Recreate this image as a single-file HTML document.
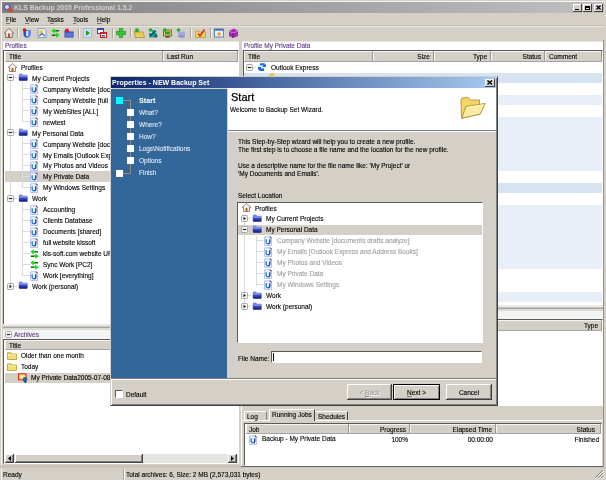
<!DOCTYPE html><html><head><meta charset="utf-8"><style>
html,body{margin:0;padding:0}
body{width:606px;height:480px;overflow:hidden;position:relative;background:#d4d0c8;font-family:'Liberation Sans', sans-serif}
.a{position:absolute}
.t{font-family:'Liberation Sans', sans-serif;font-size:6.5px;line-height:11px;white-space:nowrap;color:#000;-webkit-text-stroke:0.12px currentColor;will-change:transform}
svg{overflow:visible}
u{text-decoration-thickness:0.6px;text-underline-offset:0.8px;text-decoration-color:#777}
</style></head><body>
<div class="a" style="left:0px;top:0px;width:606px;height:480px;background:#d4d0c8"></div>
<div class="a" style="left:1px;top:1px;width:1px;height:479px;background:#f4f4f2"></div>
<div class="a" style="left:1px;top:1px;width:604px;height:1px;background:#f4f4f2"></div>
<div class="a" style="left:2px;top:2px;width:602px;height:11px;background:linear-gradient(to right,#808080,#c0c0c0)"></div>
<svg class="a" style="left:3px;top:3px" width="10" height="10" viewBox="0 0 10 10"><circle cx="4" cy="4" r="3.6" fill="#5d63a8"/><circle cx="4" cy="4" r="2" fill="#d8dcf4"/><path d="M5 6 L8 9 M6.5 5.5 L9.5 8" stroke="#e23a1e" stroke-width="1.4"/></svg>
<div class="a" style="left:14px;top:2px;font:bold 6.9px/11px 'Liberation Sans', sans-serif;color:#d4d0c8;white-space:nowrap;will-change:transform">KLS Backup 2005 Professional 1.5.2</div>
<div class="a" style="left:573px;top:4px;width:9px;height:8px;background:#d4d0c8;box-sizing:border-box;border-right:1px solid #404040;border-bottom:1px solid #404040;box-shadow:inset 1px 1px 0 #fff"></div>
<div class="a" style="left:575px;top:9px;width:4px;height:1px;background:#000"></div>
<div class="a" style="left:583px;top:4px;width:9px;height:8px;background:#d4d0c8;box-sizing:border-box;border-right:1px solid #404040;border-bottom:1px solid #404040;box-shadow:inset 1px 1px 0 #fff"></div>
<div class="a" style="left:585px;top:6px;width:5px;height:4px;border:1px solid #000;border-top-width:2px;box-sizing:border-box"></div>
<div class="a" style="left:594px;top:4px;width:9px;height:8px;background:#d4d0c8;box-sizing:border-box;border-right:1px solid #404040;border-bottom:1px solid #404040;box-shadow:inset 1px 1px 0 #fff"></div>
<svg class="a" style="left:596px;top:5px" width="5" height="5" viewBox="0 0 5 5"><path d="M0.5 0.5 L4.5 4.5 M4.5 0.5 L0.5 4.5" stroke="#000" stroke-width="1.2"/></svg>
<div class="a t" style="left:5.5px;top:14px;"><u>F</u>ile</div>
<div class="a t" style="left:24.5px;top:14px;"><u>V</u>iew</div>
<div class="a t" style="left:47px;top:14px;">T<u>a</u>sks</div>
<div class="a t" style="left:73px;top:14px;"><u>T</u>ools</div>
<div class="a t" style="left:96.5px;top:14px;"><u>H</u>elp</div>
<div class="a" style="left:2px;top:25px;width:602px;height:1px;background:#c0bcb4"></div>
<div class="a" style="left:2px;top:26px;width:602px;height:1px;background:#eceae6"></div>
<div class="a" style="left:17px;top:28px;width:1px;height:10px;background:#a8a49c"></div>
<div class="a" style="left:18px;top:28px;width:1px;height:10px;background:#f4f3f0"></div>
<div class="a" style="left:78px;top:28px;width:1px;height:10px;background:#a8a49c"></div>
<div class="a" style="left:79px;top:28px;width:1px;height:10px;background:#f4f3f0"></div>
<div class="a" style="left:112px;top:28px;width:1px;height:10px;background:#a8a49c"></div>
<div class="a" style="left:113px;top:28px;width:1px;height:10px;background:#f4f3f0"></div>
<div class="a" style="left:130px;top:28px;width:1px;height:10px;background:#a8a49c"></div>
<div class="a" style="left:131px;top:28px;width:1px;height:10px;background:#f4f3f0"></div>
<div class="a" style="left:190px;top:28px;width:1px;height:10px;background:#a8a49c"></div>
<div class="a" style="left:191px;top:28px;width:1px;height:10px;background:#f4f3f0"></div>
<div class="a" style="left:210px;top:28px;width:1px;height:10px;background:#a8a49c"></div>
<div class="a" style="left:211px;top:28px;width:1px;height:10px;background:#f4f3f0"></div>
<!--TOOLBAR-->
<svg class="a" style="left:4px;top:28px" width="10" height="10" viewBox="0 0 10 10"><path d="M5 0.5 L0.3 5 L1.8 5 L1.8 9.5 L8.2 9.5 L8.2 5 L9.7 5 Z" fill="#f2ede4" stroke="#7d736a" stroke-width="1"/><rect x="4" y="5.5" width="2" height="4" fill="#c24e16"/></svg>
<svg class="a" style="left:22px;top:28px" width="10" height="10" viewBox="0 0 10 10"><path d="M1.5 2 L8.5 2 L8.5 6 Q8.5 9 5 9.8 Q1.5 9 1.5 6 Z" fill="#2a50c8"/><path d="M5 2 L8.5 2 L8.5 6 Q8.5 9 5 9.8Z" fill="#5d86e8"/><rect x="4.3" y="3" width="1.6" height="5" fill="#fff"/><circle cx="2.5" cy="2" r="1.8" fill="#e01818"/></svg>
<svg class="a" style="left:37px;top:28px" width="10" height="10" viewBox="0 0 10 10"><path d="M1 0.5 L7 0.5 L9 2.5 L9 9.5 L1 9.5 Z" fill="#e9eef8" stroke="#7a8fb8" stroke-width="0.8"/><circle cx="4" cy="4" r="2" fill="#f0cc30"/><path d="M2 8 L5 5.5 L8 8" stroke="#3a70d0" stroke-width="1.2" fill="none"/></svg>
<svg class="a" style="left:51px;top:28px" width="9" height="10" viewBox="0 0 9 10"><path d="M3.5 2.8 L8 2.8" stroke="#0a5a0a" stroke-width="1.4"/><path d="M0.3 2.8 L3.8 0.2 L3.8 5.4 Z" fill="#10e010"/><path d="M3.5 2.8 L5 2.8" stroke="#10e010" stroke-width="1.4"/><path d="M0.8 7.2 L5.5 7.2" stroke="#0a5a0a" stroke-width="1.4"/><path d="M8.7 7.2 L5.2 4.6 L5.2 9.8 Z" fill="#10e010"/><path d="M4 7.2 L5.5 7.2" stroke="#10e010" stroke-width="1.4"/></svg>
<svg class="a" style="left:64px;top:28px" width="10" height="10" viewBox="0 0 10 10"><path d="M0.5 2.5 L4 2.5 L5 3.5 L9.5 3.5 L9.5 9.5 L0.5 9.5 Z" fill="#2b3fb0"/><rect x="1.2" y="4.5" width="7.6" height="4.3" fill="#5a76da"/><circle cx="3" cy="2.3" r="1.9" fill="#e01818"/></svg>
<svg class="a" style="left:83px;top:28px" width="9" height="10" viewBox="0 0 9 10"><rect x="0.5" y="0.5" width="8" height="9" fill="#cfe0f8" stroke="#9ab4dc" stroke-width="0.8"/><path d="M3 2.2 L7 5 L3 7.8 Z" fill="#12a012"/></svg>
<svg class="a" style="left:97px;top:28px" width="10" height="10" viewBox="0 0 10 10"><rect x="0.5" y="0.5" width="6" height="5" fill="#fff" stroke="#2a4ac0" stroke-width="1"/><rect x="0.5" y="0.5" width="6" height="1.5" fill="#2a4ac0"/><rect x="3.5" y="4.5" width="6" height="5" fill="#fff" stroke="#d02020" stroke-width="1"/><rect x="3.5" y="4.5" width="6" height="1.5" fill="#d02020"/><rect x="5" y="7" width="3" height="1.5" fill="#2a4ac0"/></svg>
<svg class="a" style="left:116px;top:28px" width="10" height="10" viewBox="0 0 10 10"><path d="M3.3 0.5 H6.7 V3.3 H9.5 V6.7 H6.7 V9.5 H3.3 V6.7 H0.5 V3.3 H3.3 Z" fill="#36c236" stroke="#1d8a1d" stroke-width="0.6"/></svg>
<svg class="a" style="left:134px;top:28px" width="11" height="10" viewBox="0 0 11 10"><path d="M0.5 4 L9 4 L10.5 9.5 L1.5 9.5 Z" fill="#e8cf5a" stroke="#a88a20" stroke-width="0.7"/><path d="M0.5 4 L0.5 3 L4 3" stroke="#a88a20" stroke-width="0.7" fill="#e8cf5a"/><circle cx="3" cy="2.3" r="2" fill="#22b022"/></svg>
<svg class="a" style="left:148px;top:28px" width="10" height="10" viewBox="0 0 10 10"><path d="M1 9.5 L1 5 L4 5 L4 2 L7 2 L7 5 L9 5 L9 9.5 Z" fill="#1f9e9e"/><path d="M2 8 L8 3" stroke="#124c4c" stroke-width="1.4"/><circle cx="2.5" cy="2" r="1.8" fill="#22b022"/><circle cx="8" cy="8" r="1.5" fill="#2a5a5a"/></svg>
<svg class="a" style="left:162px;top:28px" width="11" height="10" viewBox="0 0 11 10"><rect x="1.5" y="2" width="8" height="6" fill="#d9c860" stroke="#5a5a30" stroke-width="0.8"/><rect x="3" y="3.5" width="5" height="3" fill="#2aa02a"/><rect x="3.5" y="8.2" width="4" height="1.5" fill="#444"/><circle cx="2.8" cy="2" r="1.8" fill="#22b022"/></svg>
<svg class="a" style="left:176px;top:28px" width="10" height="10" viewBox="0 0 10 10"><ellipse cx="5.5" cy="3.5" rx="3.5" ry="1.5" fill="#c8c8ea"/><rect x="2" y="3.5" width="7" height="5" fill="#a8a8d8"/><ellipse cx="5.5" cy="8.5" rx="3.5" ry="1.3" fill="#9090c8"/><circle cx="2.5" cy="2" r="1.8" fill="#22b022"/></svg>
<svg class="a" style="left:195px;top:28px" width="11" height="10" viewBox="0 0 11 10"><path d="M0.5 3 L4 3 L5 4 L10.5 4 L10.5 9.5 L0.5 9.5 Z" fill="#f0d860" stroke="#b09020" stroke-width="0.7"/><path d="M3 5.5 L5 8 L9.5 1.5" stroke="#e02020" stroke-width="1.4" fill="none"/></svg>
<svg class="a" style="left:214px;top:28px" width="10" height="10" viewBox="0 0 10 10"><rect x="0.5" y="1" width="9" height="8" fill="#e8f0ff" stroke="#5878b8" stroke-width="0.9"/><rect x="0.5" y="1" width="9" height="1.6" fill="#3a64c0"/><circle cx="5" cy="6" r="1.8" fill="#e8a020"/></svg>
<svg class="a" style="left:228px;top:28px" width="11" height="10" viewBox="0 0 11 10"><path d="M1 3 L6 0.5 L10 3 L10 8 L5 10 L1 8 Z" fill="#a02ab0"/><path d="M1 3 L5 5 L10 3" stroke="#e070f0" stroke-width="1" fill="none"/><path d="M5 5 L5 10" stroke="#601070" stroke-width="0.8"/></svg>
<div class="a" style="left:3px;top:41px;width:236px;height:9px;background:#fff;border-top:1px solid #e8e6e0;box-sizing:border-box"></div>
<div class="a t" style="left:5px;top:40px;color:#5e3a84">Profiles</div>
<div class="a" style="left:3px;top:50px;width:236px;height:274px;background:#fff;border-top:1px solid #5a5a5a;border-left:1px solid #5a5a5a;border-right:1px solid #fff;box-sizing:border-box"></div>
<div class="a" style="left:3px;top:324px;width:236px;height:2px;background:#e8e8e4"></div>
<div class="a" style="left:3px;top:326px;width:236px;height:1px;background:#c8c4bc"></div>
<div class="a" style="left:3px;top:327px;width:236px;height:1px;background:#a8a49c"></div>
<div class="a" style="left:3px;top:328px;width:236px;height:2px;background:#dcdad4"></div>
<div class="a" style="left:5px;top:51px;width:158px;height:11px;background:#d4d0c8;border-right:1px solid #9a9a9a;border-bottom:1px solid #a4a4a4;box-shadow:inset 1px 1px 0 #f4f4f0;box-sizing:border-box"></div>
<div class="a t" style="left:9px;top:51.4px;">Title</div>
<div class="a" style="left:163px;top:51px;width:75px;height:11px;background:#d4d0c8;border-right:1px solid #9a9a9a;border-bottom:1px solid #a4a4a4;box-shadow:inset 1px 1px 0 #f4f4f0;box-sizing:border-box"></div>
<div class="a t" style="left:167px;top:51.4px;">Last Run</div>
<div class="a" style="left:10px;top:78px;width:1px;height:209px;background:#dadada"></div>
<svg class="a" style="left:8px;top:63px" width="9" height="9" viewBox="0 0 9 9"><path d="M4.5 0.5 L0 4.5 L1.5 4.5 L1.5 8.5 L7.5 8.5 L7.5 4.5 L9 4.5 Z" fill="#f4efe6" stroke="#8a7f74" stroke-width="0.9"/><rect x="3.6" y="5" width="1.8" height="3.5" fill="#c0501a"/></svg>
<div class="a t" style="left:21px;top:61.9px;">Profiles</div>
<div class="a" style="left:11px;top:77px;width:6px;height:1px;background:#dadada"></div>
<svg class="a" style="left:7px;top:74px" width="7" height="7" viewBox="0 0 7 7"><rect x="0.5" y="0.5" width="6" height="6" rx="0.8" fill="#f4f4f4" stroke="#a8a8a8" stroke-width="1"/><path d="M1.8 3.5 L5.2 3.5" stroke="#222" stroke-width="1.1"/></svg>
<svg class="a" style="left:18px;top:73px" width="10" height="8" viewBox="0 0 10 8"><defs><linearGradient id="gfb" x1="0" y1="0" x2="0" y2="1"><stop offset="0" stop-color="#8a9cf0"/><stop offset="0.5" stop-color="#3a4cc8"/><stop offset="1" stop-color="#0c1478"/></linearGradient></defs><path d="M0.8 1.8 Q0.8 0.6 2 0.6 L4 0.6 L5 1.8 L8.6 1.8 Q9.6 1.8 9.6 2.8 L9.6 6.8 Q9.6 7.8 8.6 7.8 L1.8 7.8 Q0.8 7.8 0.8 6.8 Z" fill="url(#gfb)"/><path d="M1.5 3 L8.8 3" stroke="#c0c8ff" stroke-width="0.7"/></svg>
<div class="a t" style="left:31.5px;top:72.85000000000001px;">My Current Projects</div>
<div class="a" style="left:27px;top:88px;width:3px;height:1px;background:#dadada"></div>
<svg class="a" style="left:30px;top:84px" width="8" height="10" viewBox="0 0 8 10"><path d="M0.5 0.8 L6 0.8 L7.5 2.3 L7.5 9.5 L0.5 9.5 Z" fill="#eef0fc" stroke="#b4bce6" stroke-width="0.9"/><path d="M5.8 0.6 L7.6 2.4" stroke="#3a5a9a" stroke-width="1.2"/><path d="M2.2 3.2 L2.2 6.2 Q2.2 7.8 4 7.8" fill="none" stroke="#2c8ee8" stroke-width="1.5"/><path d="M4 7.8 Q5.8 7.8 5.8 6.2 L5.8 3.2" fill="none" stroke="#2a48b0" stroke-width="1.5"/></svg>
<div class="a t" style="left:42.5px;top:83.80000000000001px;">Company Website [documents drafts analyze]</div>
<div class="a" style="left:27px;top:99px;width:3px;height:1px;background:#dadada"></div>
<svg class="a" style="left:30px;top:95px" width="8" height="10" viewBox="0 0 8 10"><path d="M0.5 0.8 L6 0.8 L7.5 2.3 L7.5 9.5 L0.5 9.5 Z" fill="#eef0fc" stroke="#b4bce6" stroke-width="0.9"/><path d="M5.8 0.6 L7.6 2.4" stroke="#3a5a9a" stroke-width="1.2"/><path d="M2.2 3.2 L2.2 6.2 Q2.2 7.8 4 7.8" fill="none" stroke="#2c8ee8" stroke-width="1.5"/><path d="M4 7.8 Q5.8 7.8 5.8 6.2 L5.8 3.2" fill="none" stroke="#2a48b0" stroke-width="1.5"/></svg>
<div class="a t" style="left:42.5px;top:94.75px;">Company Website [full backup]</div>
<div class="a" style="left:27px;top:110px;width:3px;height:1px;background:#dadada"></div>
<svg class="a" style="left:30px;top:106px" width="8" height="10" viewBox="0 0 8 10"><path d="M0.5 0.8 L6 0.8 L7.5 2.3 L7.5 9.5 L0.5 9.5 Z" fill="#eef0fc" stroke="#b4bce6" stroke-width="0.9"/><path d="M5.8 0.6 L7.6 2.4" stroke="#3a5a9a" stroke-width="1.2"/><path d="M2.2 3.2 L2.2 6.2 Q2.2 7.8 4 7.8" fill="none" stroke="#2c8ee8" stroke-width="1.5"/><path d="M4 7.8 Q5.8 7.8 5.8 6.2 L5.8 3.2" fill="none" stroke="#2a48b0" stroke-width="1.5"/></svg>
<div class="a t" style="left:42.5px;top:105.7px;">My WebSites [ALL]</div>
<div class="a" style="left:27px;top:121px;width:3px;height:1px;background:#dadada"></div>
<svg class="a" style="left:30px;top:117px" width="8" height="10" viewBox="0 0 8 10"><path d="M0.5 0.8 L6 0.8 L7.5 2.3 L7.5 9.5 L0.5 9.5 Z" fill="#eef0fc" stroke="#b4bce6" stroke-width="0.9"/><path d="M5.8 0.6 L7.6 2.4" stroke="#3a5a9a" stroke-width="1.2"/><path d="M2.2 3.2 L2.2 6.2 Q2.2 7.8 4 7.8" fill="none" stroke="#2c8ee8" stroke-width="1.5"/><path d="M4 7.8 Q5.8 7.8 5.8 6.2 L5.8 3.2" fill="none" stroke="#2a48b0" stroke-width="1.5"/></svg>
<div class="a t" style="left:42.5px;top:116.65px;">newtest</div>
<div class="a" style="left:11px;top:132px;width:6px;height:1px;background:#dadada"></div>
<svg class="a" style="left:7px;top:129px" width="7" height="7" viewBox="0 0 7 7"><rect x="0.5" y="0.5" width="6" height="6" rx="0.8" fill="#f4f4f4" stroke="#a8a8a8" stroke-width="1"/><path d="M1.8 3.5 L5.2 3.5" stroke="#222" stroke-width="1.1"/></svg>
<svg class="a" style="left:18px;top:128px" width="10" height="8" viewBox="0 0 10 8"><defs><linearGradient id="gfb" x1="0" y1="0" x2="0" y2="1"><stop offset="0" stop-color="#8a9cf0"/><stop offset="0.5" stop-color="#3a4cc8"/><stop offset="1" stop-color="#0c1478"/></linearGradient></defs><path d="M0.8 1.8 Q0.8 0.6 2 0.6 L4 0.6 L5 1.8 L8.6 1.8 Q9.6 1.8 9.6 2.8 L9.6 6.8 Q9.6 7.8 8.6 7.8 L1.8 7.8 Q0.8 7.8 0.8 6.8 Z" fill="url(#gfb)"/><path d="M1.5 3 L8.8 3" stroke="#c0c8ff" stroke-width="0.7"/></svg>
<div class="a t" style="left:31.5px;top:127.6px;">My Personal Data</div>
<div class="a" style="left:27px;top:143px;width:3px;height:1px;background:#dadada"></div>
<svg class="a" style="left:30px;top:139px" width="8" height="10" viewBox="0 0 8 10"><path d="M0.5 0.8 L6 0.8 L7.5 2.3 L7.5 9.5 L0.5 9.5 Z" fill="#eef0fc" stroke="#b4bce6" stroke-width="0.9"/><path d="M5.8 0.6 L7.6 2.4" stroke="#3a5a9a" stroke-width="1.2"/><path d="M2.2 3.2 L2.2 6.2 Q2.2 7.8 4 7.8" fill="none" stroke="#2c8ee8" stroke-width="1.5"/><path d="M4 7.8 Q5.8 7.8 5.8 6.2 L5.8 3.2" fill="none" stroke="#2a48b0" stroke-width="1.5"/></svg>
<div class="a t" style="left:42.5px;top:138.54999999999998px;">Company Website [documents drafts analyze]</div>
<div class="a" style="left:27px;top:154px;width:3px;height:1px;background:#dadada"></div>
<svg class="a" style="left:30px;top:150px" width="8" height="10" viewBox="0 0 8 10"><path d="M0.5 0.8 L6 0.8 L7.5 2.3 L7.5 9.5 L0.5 9.5 Z" fill="#eef0fc" stroke="#b4bce6" stroke-width="0.9"/><path d="M5.8 0.6 L7.6 2.4" stroke="#3a5a9a" stroke-width="1.2"/><path d="M2.2 3.2 L2.2 6.2 Q2.2 7.8 4 7.8" fill="none" stroke="#2c8ee8" stroke-width="1.5"/><path d="M4 7.8 Q5.8 7.8 5.8 6.2 L5.8 3.2" fill="none" stroke="#2a48b0" stroke-width="1.5"/></svg>
<div class="a t" style="left:42.5px;top:149.5px;">My Emails [Outlook Express and Address Books]</div>
<div class="a" style="left:27px;top:165px;width:3px;height:1px;background:#dadada"></div>
<svg class="a" style="left:30px;top:161px" width="8" height="10" viewBox="0 0 8 10"><path d="M0.5 0.8 L6 0.8 L7.5 2.3 L7.5 9.5 L0.5 9.5 Z" fill="#eef0fc" stroke="#b4bce6" stroke-width="0.9"/><path d="M5.8 0.6 L7.6 2.4" stroke="#3a5a9a" stroke-width="1.2"/><path d="M2.2 3.2 L2.2 6.2 Q2.2 7.8 4 7.8" fill="none" stroke="#2c8ee8" stroke-width="1.5"/><path d="M4 7.8 Q5.8 7.8 5.8 6.2 L5.8 3.2" fill="none" stroke="#2a48b0" stroke-width="1.5"/></svg>
<div class="a t" style="left:42.5px;top:160.45000000000002px;">My Photos and Videos</div>
<div class="a" style="left:5px;top:171px;width:105px;height:11px;background:#d4d0c8"></div>
<div class="a" style="left:27px;top:176px;width:3px;height:1px;background:#dadada"></div>
<svg class="a" style="left:30px;top:172px" width="8" height="10" viewBox="0 0 8 10"><path d="M0.5 0.8 L6 0.8 L7.5 2.3 L7.5 9.5 L0.5 9.5 Z" fill="#eef0fc" stroke="#b4bce6" stroke-width="0.9"/><path d="M5.8 0.6 L7.6 2.4" stroke="#3a5a9a" stroke-width="1.2"/><path d="M2.2 3.2 L2.2 6.2 Q2.2 7.8 4 7.8" fill="none" stroke="#2c8ee8" stroke-width="1.5"/><path d="M4 7.8 Q5.8 7.8 5.8 6.2 L5.8 3.2" fill="none" stroke="#2a48b0" stroke-width="1.5"/></svg>
<div class="a t" style="left:42.5px;top:171.4px;">My Private Data</div>
<div class="a" style="left:27px;top:187px;width:3px;height:1px;background:#dadada"></div>
<svg class="a" style="left:30px;top:183px" width="8" height="10" viewBox="0 0 8 10"><path d="M0.5 0.8 L6 0.8 L7.5 2.3 L7.5 9.5 L0.5 9.5 Z" fill="#eef0fc" stroke="#b4bce6" stroke-width="0.9"/><path d="M5.8 0.6 L7.6 2.4" stroke="#3a5a9a" stroke-width="1.2"/><path d="M2.2 3.2 L2.2 6.2 Q2.2 7.8 4 7.8" fill="none" stroke="#2c8ee8" stroke-width="1.5"/><path d="M4 7.8 Q5.8 7.8 5.8 6.2 L5.8 3.2" fill="none" stroke="#2a48b0" stroke-width="1.5"/></svg>
<div class="a t" style="left:42.5px;top:182.35px;">My Windows Settings</div>
<div class="a" style="left:11px;top:198px;width:6px;height:1px;background:#dadada"></div>
<svg class="a" style="left:7px;top:195px" width="7" height="7" viewBox="0 0 7 7"><rect x="0.5" y="0.5" width="6" height="6" rx="0.8" fill="#f4f4f4" stroke="#a8a8a8" stroke-width="1"/><path d="M1.8 3.5 L5.2 3.5" stroke="#222" stroke-width="1.1"/></svg>
<svg class="a" style="left:18px;top:194px" width="10" height="8" viewBox="0 0 10 8"><defs><linearGradient id="gfb" x1="0" y1="0" x2="0" y2="1"><stop offset="0" stop-color="#8a9cf0"/><stop offset="0.5" stop-color="#3a4cc8"/><stop offset="1" stop-color="#0c1478"/></linearGradient></defs><path d="M0.8 1.8 Q0.8 0.6 2 0.6 L4 0.6 L5 1.8 L8.6 1.8 Q9.6 1.8 9.6 2.8 L9.6 6.8 Q9.6 7.8 8.6 7.8 L1.8 7.8 Q0.8 7.8 0.8 6.8 Z" fill="url(#gfb)"/><path d="M1.5 3 L8.8 3" stroke="#c0c8ff" stroke-width="0.7"/></svg>
<div class="a t" style="left:31.5px;top:193.29999999999998px;">Work</div>
<div class="a" style="left:27px;top:209px;width:3px;height:1px;background:#dadada"></div>
<svg class="a" style="left:30px;top:205px" width="8" height="10" viewBox="0 0 8 10"><path d="M0.5 0.8 L6 0.8 L7.5 2.3 L7.5 9.5 L0.5 9.5 Z" fill="#eef0fc" stroke="#b4bce6" stroke-width="0.9"/><path d="M5.8 0.6 L7.6 2.4" stroke="#3a5a9a" stroke-width="1.2"/><path d="M2.2 3.2 L2.2 6.2 Q2.2 7.8 4 7.8" fill="none" stroke="#2c8ee8" stroke-width="1.5"/><path d="M4 7.8 Q5.8 7.8 5.8 6.2 L5.8 3.2" fill="none" stroke="#2a48b0" stroke-width="1.5"/></svg>
<div class="a t" style="left:42.5px;top:204.25px;">Accounting</div>
<div class="a" style="left:27px;top:220px;width:3px;height:1px;background:#dadada"></div>
<svg class="a" style="left:30px;top:216px" width="8" height="10" viewBox="0 0 8 10"><path d="M0.5 0.8 L6 0.8 L7.5 2.3 L7.5 9.5 L0.5 9.5 Z" fill="#eef0fc" stroke="#b4bce6" stroke-width="0.9"/><path d="M5.8 0.6 L7.6 2.4" stroke="#3a5a9a" stroke-width="1.2"/><path d="M2.2 3.2 L2.2 6.2 Q2.2 7.8 4 7.8" fill="none" stroke="#2c8ee8" stroke-width="1.5"/><path d="M4 7.8 Q5.8 7.8 5.8 6.2 L5.8 3.2" fill="none" stroke="#2a48b0" stroke-width="1.5"/></svg>
<div class="a t" style="left:42.5px;top:215.2px;">Clients Database</div>
<div class="a" style="left:27px;top:231px;width:3px;height:1px;background:#dadada"></div>
<svg class="a" style="left:30px;top:227px" width="8" height="10" viewBox="0 0 8 10"><path d="M0.5 0.8 L6 0.8 L7.5 2.3 L7.5 9.5 L0.5 9.5 Z" fill="#eef0fc" stroke="#b4bce6" stroke-width="0.9"/><path d="M5.8 0.6 L7.6 2.4" stroke="#3a5a9a" stroke-width="1.2"/><path d="M2.2 3.2 L2.2 6.2 Q2.2 7.8 4 7.8" fill="none" stroke="#2c8ee8" stroke-width="1.5"/><path d="M4 7.8 Q5.8 7.8 5.8 6.2 L5.8 3.2" fill="none" stroke="#2a48b0" stroke-width="1.5"/></svg>
<div class="a t" style="left:42.5px;top:226.15px;">Documents [shared]</div>
<div class="a" style="left:27px;top:242px;width:3px;height:1px;background:#dadada"></div>
<svg class="a" style="left:30px;top:238px" width="8" height="10" viewBox="0 0 8 10"><path d="M0.5 0.8 L6 0.8 L7.5 2.3 L7.5 9.5 L0.5 9.5 Z" fill="#eef0fc" stroke="#b4bce6" stroke-width="0.9"/><path d="M5.8 0.6 L7.6 2.4" stroke="#3a5a9a" stroke-width="1.2"/><path d="M2.2 3.2 L2.2 6.2 Q2.2 7.8 4 7.8" fill="none" stroke="#2c8ee8" stroke-width="1.5"/><path d="M4 7.8 Q5.8 7.8 5.8 6.2 L5.8 3.2" fill="none" stroke="#2a48b0" stroke-width="1.5"/></svg>
<div class="a t" style="left:42.5px;top:237.1px;">full website klssoft</div>
<div class="a" style="left:27px;top:253px;width:3px;height:1px;background:#dadada"></div>
<svg class="a" style="left:30px;top:249px" width="9" height="10" viewBox="0 0 9 10"><path d="M3.5 2.8 L8 2.8" stroke="#0a5a0a" stroke-width="1.4"/><path d="M0.3 2.8 L3.8 0.2 L3.8 5.4 Z" fill="#10e010"/><path d="M3.5 2.8 L5 2.8" stroke="#10e010" stroke-width="1.4"/><path d="M0.8 7.2 L5.5 7.2" stroke="#0a5a0a" stroke-width="1.4"/><path d="M8.7 7.2 L5.2 4.6 L5.2 9.8 Z" fill="#10e010"/><path d="M4 7.2 L5.5 7.2" stroke="#10e010" stroke-width="1.4"/></svg>
<div class="a t" style="left:42.5px;top:248.04999999999998px;">kls-soft.com website UPLOAD</div>
<div class="a" style="left:27px;top:264px;width:3px;height:1px;background:#dadada"></div>
<svg class="a" style="left:30px;top:260px" width="9" height="10" viewBox="0 0 9 10"><path d="M3.5 2.8 L8 2.8" stroke="#0a5a0a" stroke-width="1.4"/><path d="M0.3 2.8 L3.8 0.2 L3.8 5.4 Z" fill="#10e010"/><path d="M3.5 2.8 L5 2.8" stroke="#10e010" stroke-width="1.4"/><path d="M0.8 7.2 L5.5 7.2" stroke="#0a5a0a" stroke-width="1.4"/><path d="M8.7 7.2 L5.2 4.6 L5.2 9.8 Z" fill="#10e010"/><path d="M4 7.2 L5.5 7.2" stroke="#10e010" stroke-width="1.4"/></svg>
<div class="a t" style="left:42.5px;top:259.0px;">Sync Work [PC2]</div>
<div class="a" style="left:27px;top:275px;width:3px;height:1px;background:#dadada"></div>
<svg class="a" style="left:30px;top:271px" width="8" height="10" viewBox="0 0 8 10"><path d="M0.5 0.8 L6 0.8 L7.5 2.3 L7.5 9.5 L0.5 9.5 Z" fill="#eef0fc" stroke="#b4bce6" stroke-width="0.9"/><path d="M5.8 0.6 L7.6 2.4" stroke="#3a5a9a" stroke-width="1.2"/><path d="M2.2 3.2 L2.2 6.2 Q2.2 7.8 4 7.8" fill="none" stroke="#2c8ee8" stroke-width="1.5"/><path d="M4 7.8 Q5.8 7.8 5.8 6.2 L5.8 3.2" fill="none" stroke="#2a48b0" stroke-width="1.5"/></svg>
<div class="a t" style="left:42.5px;top:269.94999999999993px;">Work [everything]</div>
<div class="a" style="left:11px;top:286px;width:6px;height:1px;background:#dadada"></div>
<svg class="a" style="left:7px;top:283px" width="7" height="7" viewBox="0 0 7 7"><rect x="0.5" y="0.5" width="6" height="6" rx="0.8" fill="#f4f4f4" stroke="#a8a8a8" stroke-width="1"/><path d="M2.5 1.8 L5 3.5 L2.5 5.2 Z" fill="#222"/></svg>
<svg class="a" style="left:18px;top:281px" width="10" height="8" viewBox="0 0 10 8"><defs><linearGradient id="gfb" x1="0" y1="0" x2="0" y2="1"><stop offset="0" stop-color="#8a9cf0"/><stop offset="0.5" stop-color="#3a4cc8"/><stop offset="1" stop-color="#0c1478"/></linearGradient></defs><path d="M0.8 1.8 Q0.8 0.6 2 0.6 L4 0.6 L5 1.8 L8.6 1.8 Q9.6 1.8 9.6 2.8 L9.6 6.8 Q9.6 7.8 8.6 7.8 L1.8 7.8 Q0.8 7.8 0.8 6.8 Z" fill="url(#gfb)"/><path d="M1.5 3 L8.8 3" stroke="#c0c8ff" stroke-width="0.7"/></svg>
<div class="a t" style="left:31.5px;top:280.9px;">Work (personal)</div>
<div class="a" style="left:22px;top:81px;width:1px;height:40px;background:#dadada"></div>
<div class="a" style="left:22px;top:88px;width:6px;height:1px;background:#dadada"></div>
<div class="a" style="left:22px;top:99px;width:6px;height:1px;background:#dadada"></div>
<div class="a" style="left:22px;top:110px;width:6px;height:1px;background:#dadada"></div>
<div class="a" style="left:22px;top:121px;width:6px;height:1px;background:#dadada"></div>
<div class="a" style="left:22px;top:136px;width:1px;height:51px;background:#dadada"></div>
<div class="a" style="left:22px;top:143px;width:6px;height:1px;background:#dadada"></div>
<div class="a" style="left:22px;top:154px;width:6px;height:1px;background:#dadada"></div>
<div class="a" style="left:22px;top:165px;width:6px;height:1px;background:#dadada"></div>
<div class="a" style="left:22px;top:176px;width:6px;height:1px;background:#dadada"></div>
<div class="a" style="left:22px;top:187px;width:6px;height:1px;background:#dadada"></div>
<div class="a" style="left:22px;top:202px;width:1px;height:73px;background:#dadada"></div>
<div class="a" style="left:22px;top:209px;width:6px;height:1px;background:#dadada"></div>
<div class="a" style="left:22px;top:220px;width:6px;height:1px;background:#dadada"></div>
<div class="a" style="left:22px;top:231px;width:6px;height:1px;background:#dadada"></div>
<div class="a" style="left:22px;top:242px;width:6px;height:1px;background:#dadada"></div>
<div class="a" style="left:22px;top:253px;width:6px;height:1px;background:#dadada"></div>
<div class="a" style="left:22px;top:264px;width:6px;height:1px;background:#dadada"></div>
<div class="a" style="left:22px;top:275px;width:6px;height:1px;background:#dadada"></div>
<div class="a" style="left:3px;top:330px;width:236px;height:9px;background:#f3f4f4;box-sizing:border-box"></div>
<svg class="a" style="left:5px;top:331px" width="7" height="7" viewBox="0 0 7 7"><rect x="0.5" y="0.5" width="6" height="6" rx="0.8" fill="#f4f4f4" stroke="#a8a8a8" stroke-width="1"/><path d="M1.8 3.5 L5.2 3.5" stroke="#222" stroke-width="1.1"/></svg>
<div class="a t" style="left:13.5px;top:329px;color:#5e3a84">Archives</div>
<div class="a" style="left:3px;top:339px;width:236px;height:125px;background:#fff;border-top:1px solid #5a5a5a;border-left:1px solid #5a5a5a;border-right:1px solid #fff;border-bottom:1px solid #fff;box-sizing:border-box"></div>
<div class="a" style="left:5px;top:340px;width:233px;height:10px;background:#d4d0c8;border-right:1px solid #9a9a9a;border-bottom:1px solid #a4a4a4;box-shadow:inset 1px 1px 0 #f4f4f0;box-sizing:border-box"></div>
<div class="a t" style="left:9px;top:340.4px;">Title</div>
<svg class="a" style="left:7px;top:352px" width="10" height="8" viewBox="0 0 10 8"><path d="M0.5 0.8 L4 0.8 L5 2 L9.5 2 L9.5 7.5 L0.5 7.5 Z" fill="#f2dd72" stroke="#b89a2a" stroke-width="0.8"/><path d="M0.8 3 L9.2 3" stroke="#fff6b8" stroke-width="0.8"/></svg>
<div class="a t" style="left:20.5px;top:350px;">Older than one month</div>
<svg class="a" style="left:7px;top:363px" width="10" height="8" viewBox="0 0 10 8"><path d="M0.5 0.8 L4 0.8 L5 2 L9.5 2 L9.5 7.5 L0.5 7.5 Z" fill="#f2dd72" stroke="#b89a2a" stroke-width="0.8"/><path d="M0.8 3 L9.2 3" stroke="#fff6b8" stroke-width="0.8"/></svg>
<div class="a t" style="left:20.5px;top:361px;">Today</div>
<div class="a" style="left:5px;top:373px;width:105px;height:10px;background:#d4d0c8"></div>
<svg class="a" style="left:18px;top:373px" width="10" height="10" viewBox="0 0 10 10"><rect x="0.5" y="0.8" width="7.5" height="6" fill="#f8d070" stroke="#e03010" stroke-width="1.1"/><rect x="2" y="2.5" width="4.5" height="2.8" fill="#fff4c0"/><circle cx="7" cy="6.5" r="2.4" fill="#2a6a9a"/><path d="M6.5 8 L8 9.8" stroke="#103a5a" stroke-width="1.4"/></svg>
<div class="a t" style="left:31px;top:372px;">My Private Data2005-07-08</div>
<div class="a" style="left:5px;top:454px;width:233px;height:9px;background:#e6e4de"></div>
<div class="a" style="left:5px;top:454px;width:9px;height:9px;background:#d4d0c8;box-sizing:border-box;border-right:1px solid #404040;border-bottom:1px solid #404040;box-shadow:inset 1px 1px 0 #fff, inset -1px -1px 0 #808080;"></div>
<div class="a t" style="left:5px;top:457px;width:9px;text-align:center;color:#000"></div>
<svg class="a" style="left:8px;top:456px" width="4" height="5" viewBox="0 0 4 5"><path d="M3 0 L0 2.5 L3 5 Z" fill="#000"/></svg>
<div class="a" style="left:15px;top:454px;width:128px;height:9px;background:#d4d0c8;box-sizing:border-box;border-right:1px solid #404040;border-bottom:1px solid #404040;box-shadow:inset 1px 1px 0 #fff, inset -1px -1px 0 #808080;"></div>
<div class="a t" style="left:15px;top:457px;width:128px;text-align:center;color:#000"></div>
<div class="a" style="left:228px;top:454px;width:9px;height:9px;background:#d4d0c8;box-sizing:border-box;border-right:1px solid #404040;border-bottom:1px solid #404040;box-shadow:inset 1px 1px 0 #fff, inset -1px -1px 0 #808080;"></div>
<div class="a t" style="left:228px;top:457px;width:9px;text-align:center;color:#000"></div>
<svg class="a" style="left:231px;top:456px" width="4" height="5" viewBox="0 0 4 5"><path d="M0 0 L3 2.5 L0 5 Z" fill="#000"/></svg>
<div class="a" style="left:242px;top:41px;width:361px;height:9px;background:#fff;border-top:1px solid #e8e6e0;box-sizing:border-box"></div>
<div class="a t" style="left:244px;top:40px;color:#5e3a84">Profile My Private Data</div>
<div class="a" style="left:243px;top:50px;width:360px;height:255px;background:#fff;border-top:1px solid #5a5a5a;border-left:1px solid #5a5a5a;border-right:1px solid #fff;box-sizing:border-box"></div>
<div class="a" style="left:242px;top:305px;width:361px;height:2px;background:#e8e8e4"></div>
<div class="a" style="left:242px;top:307px;width:361px;height:1px;background:#c8c4bc"></div>
<div class="a" style="left:242px;top:308px;width:361px;height:1px;background:#a8a49c"></div>
<div class="a" style="left:242px;top:309px;width:361px;height:2px;background:#dcdad4"></div>
<div class="a" style="left:244px;top:51px;width:129px;height:11px;background:#d4d0c8;border-right:1px solid #9a9a9a;border-bottom:1px solid #a4a4a4;box-shadow:inset 1px 1px 0 #f4f4f0;box-sizing:border-box"></div>
<div class="a t" style="left:248px;top:51.4px;">Title</div>
<div class="a" style="left:373px;top:51px;width:61px;height:11px;background:#d4d0c8;border-right:1px solid #9a9a9a;border-bottom:1px solid #a4a4a4;box-shadow:inset 1px 1px 0 #f4f4f0;box-sizing:border-box"></div>
<div class="a t" style="left:373px;top:51.4px;width:57px;text-align:right">Size</div>
<div class="a" style="left:434px;top:51px;width:57px;height:11px;background:#d4d0c8;border-right:1px solid #9a9a9a;border-bottom:1px solid #a4a4a4;box-shadow:inset 1px 1px 0 #f4f4f0;box-sizing:border-box"></div>
<div class="a t" style="left:434px;top:51.4px;width:53px;text-align:right">Type</div>
<div class="a" style="left:491px;top:51px;width:54px;height:11px;background:#d4d0c8;border-right:1px solid #9a9a9a;border-bottom:1px solid #a4a4a4;box-shadow:inset 1px 1px 0 #f4f4f0;box-sizing:border-box"></div>
<div class="a t" style="left:491px;top:51.4px;width:50px;text-align:right">Status</div>
<div class="a" style="left:545px;top:51px;width:57px;height:11px;background:#d4d0c8;border-right:1px solid #9a9a9a;border-bottom:1px solid #a4a4a4;box-shadow:inset 1px 1px 0 #f4f4f0;box-sizing:border-box"></div>
<div class="a t" style="left:549px;top:51.4px;">Comment</div>
<div class="a" style="left:244px;top:72.5px;width:358px;height:10px;background:#d6e3f1"></div>
<div class="a" style="left:244px;top:94.5px;width:358px;height:10px;background:#e9eff8"></div>
<div class="a" style="left:244px;top:116.5px;width:358px;height:54px;background:#e9eff8"></div>
<div class="a" style="left:244px;top:182.5px;width:358px;height:10px;background:#d6e3f1"></div>
<div class="a" style="left:244px;top:204.5px;width:358px;height:64px;background:#e9eff8"></div>
<div class="a" style="left:244px;top:291.5px;width:358px;height:10px;background:#e9eff8"></div>
<svg class="a" style="left:246px;top:64px" width="7" height="7" viewBox="0 0 7 7"><rect x="0.5" y="0.5" width="6" height="6" rx="0.8" fill="#f4f4f4" stroke="#a8a8a8" stroke-width="1"/><path d="M1.8 3.5 L5.2 3.5" stroke="#222" stroke-width="1.1"/></svg>
<div class="a" style="left:253px;top:67px;width:3px;height:1px;background:#dadada"></div>
<svg class="a" style="left:257px;top:62px" width="10" height="10" viewBox="0 0 10 10"><path d="M1 4 Q1 1 4 1 L7 1 L9 3 L9 6 Q9 9 6 9 L3 9 L1 7 Z" fill="#e8f0fa"/><path d="M3 1.2 L7.5 1.2 L9 3 L9 5 L6 5 L6 3.5 L3 3.5 Z" fill="#1a78e0"/><path d="M1 5 L4 5 L4 6.5 L7 6.5 L7 9 L3 9 L1 7 Z" fill="#1a6ad0"/></svg>
<svg class="a" style="left:268px;top:72px" width="8" height="4" viewBox="0 0 8 4"><path d="M0.5 4 L4 0.5 L7.5 4 Z" fill="#f0c040"/></svg>
<div class="a t" style="left:270.5px;top:62px;">Outlook Express</div>
<div class="a" style="left:242px;top:311px;width:361px;height:8px;background:#f3f4f4;box-sizing:border-box"></div>
<div class="a" style="left:243px;top:319px;width:360px;height:87px;background:#fff;border-top:1px solid #5a5a5a;border-left:1px solid #5a5a5a;border-right:1px solid #fff;box-sizing:border-box"></div>
<div class="a" style="left:244px;top:320px;width:358px;height:11px;background:#d4d0c8;border-right:1px solid #9a9a9a;border-bottom:1px solid #a4a4a4;box-shadow:inset 1px 1px 0 #f4f4f0;box-sizing:border-box"></div>
<div class="a t" style="left:244px;top:320.4px;width:354px;text-align:right">Type</div>
<div class="a" style="left:241px;top:406px;width:363px;height:60px;background:#d4d0c8;border-left:1px solid #fff;box-sizing:border-box"></div>
<div class="a" style="left:242px;top:420px;width:362px;height:46px;border-top:1px solid #fff;box-sizing:border-box"></div>
<div class="a" style="left:244px;top:411px;width:23px;height:9px;background:#d4d0c8;border-top:1px solid #fff;border-left:1px solid #fff;border-right:1px solid #808080;box-sizing:border-box"></div>
<div class="a t" style="left:247px;top:410.5px;">Log</div>
<div class="a" style="left:269px;top:409px;width:46px;height:12px;background:#d4d0c8;border-top:1px solid #fff;border-left:1px solid #fff;border-right:1px solid #404040;box-sizing:border-box"></div>
<div class="a t" style="left:272px;top:409px;">Running Jobs</div>
<div class="a" style="left:315px;top:411px;width:33px;height:9px;background:#d4d0c8;border-top:1px solid #fff;border-right:1px solid #404040;box-sizing:border-box"></div>
<div class="a t" style="left:318px;top:410.5px;">Shedules</div>
<div class="a" style="left:244px;top:422.5px;width:358px;height:43px;background:#fff;border-top:1px solid #5a5a5a;border-left:1px solid #5a5a5a;border-right:1px solid #fff;border-bottom:1px solid #fff;box-sizing:border-box"></div>
<div class="a" style="left:245.5px;top:423.5px;width:103.5px;height:10px;background:#d4d0c8;border-right:1px solid #9a9a9a;border-bottom:1px solid #a4a4a4;box-shadow:inset 1px 1px 0 #f4f4f0;box-sizing:border-box"></div>
<div class="a t" style="left:248.5px;top:423.9px;">Job</div>
<div class="a" style="left:349px;top:423.5px;width:61px;height:10px;background:#d4d0c8;border-right:1px solid #9a9a9a;border-bottom:1px solid #a4a4a4;box-shadow:inset 1px 1px 0 #f4f4f0;box-sizing:border-box"></div>
<div class="a t" style="left:349px;top:423.9px;width:57px;text-align:right">Progress</div>
<div class="a" style="left:410px;top:423.5px;width:86px;height:10px;background:#d4d0c8;border-right:1px solid #9a9a9a;border-bottom:1px solid #a4a4a4;box-shadow:inset 1px 1px 0 #f4f4f0;box-sizing:border-box"></div>
<div class="a t" style="left:410px;top:423.9px;width:82px;text-align:right">Elapsed Time</div>
<div class="a" style="left:496px;top:423.5px;width:105px;height:10px;background:#d4d0c8;border-right:1px solid #9a9a9a;border-bottom:1px solid #a4a4a4;box-shadow:inset 1px 1px 0 #f4f4f0;box-sizing:border-box"></div>
<div class="a t" style="left:496px;top:423.9px;width:99px;text-align:right">Status</div>
<svg class="a" style="left:249px;top:435px" width="8" height="10" viewBox="0 0 8 10"><path d="M0.5 0.8 L6 0.8 L7.5 2.3 L7.5 9.5 L0.5 9.5 Z" fill="#eef0fc" stroke="#b4bce6" stroke-width="0.9"/><path d="M5.8 0.6 L7.6 2.4" stroke="#3a5a9a" stroke-width="1.2"/><path d="M2.2 3.2 L2.2 6.2 Q2.2 7.8 4 7.8" fill="none" stroke="#2c8ee8" stroke-width="1.5"/><path d="M4 7.8 Q5.8 7.8 5.8 6.2 L5.8 3.2" fill="none" stroke="#2a48b0" stroke-width="1.5"/></svg>
<div class="a t" style="left:261.5px;top:433.2px;">Backup - My Private Data</div>
<div class="a t" style="left:349px;top:433.5px;width:59px;text-align:right">100%</div>
<div class="a t" style="left:410px;top:433.5px;width:83px;text-align:right">00:00:00</div>
<div class="a t" style="left:496px;top:433.5px;width:103px;text-align:right">Finished</div>
<div class="a" style="left:241px;top:466px;width:363px;height:1px;background:#6a6a6a"></div>
<div class="a" style="left:0px;top:465px;width:241px;height:3px;background:#c9c5bd"></div>
<div class="a" style="left:241px;top:467px;width:365px;height:1px;background:#c9c5bd"></div>
<div class="a" style="left:123px;top:468px;width:1px;height:12px;background:#a8a8a8"></div>
<div class="a" style="left:124px;top:468px;width:1px;height:12px;background:#f4f4f4"></div>
<div class="a t" style="left:3px;top:469px;">Ready</div>
<div class="a t" style="left:125.5px;top:469px;">Total archives: 6, Size: 2 MB (2,573,031 bytes)</div>
<svg class="a" style="left:594px;top:469px" width="10" height="10" viewBox="0 0 10 10"><path d="M9 1 L1 9 M9 4 L4 9 M9 7 L7 9" stroke="#808080" stroke-width="1"/><path d="M9.8 1.8 L1.8 9.8 M9.8 4.8 L4.8 9.8 M9.8 7.8 L7.8 9.8" stroke="#fff" stroke-width="0.8"/></svg>
<div class="a" style="left:603px;top:40px;width:1px;height:427px;background:#909090"></div>
<div class="a" style="left:110px;top:76px;width:388px;height:330px;background:#d4d0c8;border-top:1px solid #d4d0c8;border-left:1px solid #d4d0c8;border-right:1px solid #404040;border-bottom:1px solid #404040;box-sizing:border-box;box-shadow:inset 1px 1px 0 #fff, inset -1px -1px 0 #808080"></div>
<div class="a" style="left:111px;top:77px;width:385px;height:11px;background:linear-gradient(to right,#0a246a,#a6caf0)"></div>
<div class="a" style="left:111.5px;top:77px;font:bold 7px/11px 'Liberation Sans', sans-serif;color:#fff;white-space:nowrap;will-change:transform">Properties - NEW Backup Set</div>
<div class="a" style="left:485px;top:79px;width:10px;height:8px;background:#d4d0c8;box-sizing:border-box;border-right:1px solid #404040;border-bottom:1px solid #404040;box-shadow:inset 1px 1px 0 #fff"></div>
<svg class="a" style="left:487px;top:80px" width="6" height="5" viewBox="0 0 6 5"><path d="M0.5 0.5 L5 4.5 M5 0.5 L0.5 4.5" stroke="#000" stroke-width="1.3"/></svg>
<div class="a" style="left:111px;top:89px;width:116px;height:289px;background:#336699"></div>
<div class="a" style="left:123px;top:100px;width:8px;height:1px;background:#9a8c7c"></div>
<div class="a" style="left:130px;top:100px;width:1px;height:73px;background:#9a8c7c"></div>
<div class="a" style="left:123px;top:173px;width:8px;height:1px;background:#9a8c7c"></div>
<div class="a" style="left:130px;top:112px;width:0px;height:0px;"></div>
<div class="a" style="left:130px;top:124px;width:0px;height:0px;"></div>
<div class="a" style="left:130px;top:136px;width:0px;height:0px;"></div>
<div class="a" style="left:130px;top:148px;width:0px;height:0px;"></div>
<div class="a" style="left:130px;top:160px;width:0px;height:0px;"></div>
<div class="a" style="left:116px;top:97px;width:7px;height:7px;background:#00ffff"></div>
<div class="a" style="left:127px;top:109px;width:7px;height:7px;background:#fff"></div>
<div class="a t" style="left:139px;top:106.5px;color:#eef2f8;-webkit-text-stroke:0.05px currentColor">What?</div>
<div class="a" style="left:127px;top:121px;width:7px;height:7px;background:#fff"></div>
<div class="a t" style="left:139px;top:118.5px;color:#eef2f8;-webkit-text-stroke:0.05px currentColor">Where?</div>
<div class="a" style="left:127px;top:133px;width:7px;height:7px;background:#fff"></div>
<div class="a t" style="left:139px;top:130.5px;color:#eef2f8;-webkit-text-stroke:0.05px currentColor">How?</div>
<div class="a" style="left:127px;top:145px;width:7px;height:7px;background:#fff"></div>
<div class="a t" style="left:139px;top:142.5px;color:#eef2f8;-webkit-text-stroke:0.05px currentColor">Logs\Notifications</div>
<div class="a" style="left:127px;top:157px;width:7px;height:7px;background:#fff"></div>
<div class="a t" style="left:139px;top:154.5px;color:#eef2f8;-webkit-text-stroke:0.05px currentColor">Options</div>
<div class="a" style="left:116px;top:170px;width:7px;height:7px;background:#fff"></div>
<div class="a t" style="left:139px;top:167px;color:#eef2f8;-webkit-text-stroke:0.05px currentColor">Finish</div>
<div class="a" style="left:138.5px;top:95px;font:bold 7.2px/11px 'Liberation Sans', sans-serif;color:#fff;white-space:nowrap;will-change:transform">Start</div>
<div class="a" style="left:228px;top:88px;width:268px;height:42px;background:#fff"></div>
<div class="a" style="left:228px;top:130px;width:268px;height:1px;background:#808080"></div>
<div class="a" style="left:228px;top:131px;width:268px;height:1px;background:#fff"></div>
<div class="a" style="left:230.5px;top:90px;font:11px/14px 'Liberation Sans', sans-serif;color:#000;white-space:nowrap;-webkit-text-stroke:0.25px #000;will-change:transform">Start</div>
<div class="a t" style="left:230px;top:104px;">Welcome to Backup Set Wizard.</div>
<svg class="a" style="left:460px;top:97px" width="26" height="22" viewBox="0 0 26 22"><path d="M1 3.5 Q1 0.6 3.5 0.6 L8 0.6 L10.5 3 L19.5 3 L19.5 17 L1.5 21.2 Z" fill="#f2d768" stroke="#c49a3c" stroke-width="1"/><path d="M1.8 21.2 L5.8 9.5 L25.2 6.5 L20.2 17.2 Z" fill="#fbeba2" stroke="#b99032" stroke-width="1"/><path d="M6.8 10.5 L23.5 7.8" stroke="#fff8d8" stroke-width="1"/></svg>
<div class="a t" style="left:238px;top:135.6px">This Step-by-Step wizard will help you to create a new profile.</div>
<div class="a t" style="left:238px;top:143.9px">The first step is to choose a file name and the location for the new profile.</div>
<div class="a t" style="left:238px;top:159.6px">Use a descriptive name for the file name like: 'My Project' or</div>
<div class="a t" style="left:238px;top:167.9px">'My Documents and Emails'.</div>
<div class="a t" style="left:238px;top:190.3px">Select Location</div>
<div class="a" style="left:237px;top:202px;width:246px;height:141px;background:#fff;border-top:1px solid #5a5a5a;border-left:1px solid #5a5a5a;border-right:1px solid #fff;border-bottom:1px solid #fff;box-sizing:border-box"></div>
<div class="a" style="left:244px;top:214px;width:1px;height:93px;background:#dadada"></div>
<div class="a" style="left:256px;top:236px;width:1px;height:50px;background:#dadada"></div>
<svg class="a" style="left:242px;top:203px" width="9" height="9" viewBox="0 0 9 9"><path d="M4.5 0.5 L0 4.5 L1.5 4.5 L1.5 8.5 L7.5 8.5 L7.5 4.5 L9 4.5 Z" fill="#f4efe6" stroke="#8a7f74" stroke-width="0.9"/><rect x="3.6" y="5" width="1.8" height="3.5" fill="#c0501a"/></svg>
<div class="a t" style="left:255px;top:202.5px;">Profiles</div>
<div class="a" style="left:245px;top:218px;width:6px;height:1px;background:#dadada"></div>
<svg class="a" style="left:241px;top:215px" width="7" height="7" viewBox="0 0 7 7"><rect x="0.5" y="0.5" width="6" height="6" rx="0.8" fill="#f4f4f4" stroke="#a8a8a8" stroke-width="1"/><path d="M2.5 1.8 L5 3.5 L2.5 5.2 Z" fill="#222"/></svg>
<svg class="a" style="left:251.5px;top:214px" width="10" height="8" viewBox="0 0 10 8"><defs><linearGradient id="gfb" x1="0" y1="0" x2="0" y2="1"><stop offset="0" stop-color="#8a9cf0"/><stop offset="0.5" stop-color="#3a4cc8"/><stop offset="1" stop-color="#0c1478"/></linearGradient></defs><path d="M0.8 1.8 Q0.8 0.6 2 0.6 L4 0.6 L5 1.8 L8.6 1.8 Q9.6 1.8 9.6 2.8 L9.6 6.8 Q9.6 7.8 8.6 7.8 L1.8 7.8 Q0.8 7.8 0.8 6.8 Z" fill="url(#gfb)"/><path d="M1.5 3 L8.8 3" stroke="#c0c8ff" stroke-width="0.7"/></svg>
<div class="a t" style="left:265.5px;top:213.4px;">My Current Projects</div>
<div class="a" style="left:238px;top:225px;width:244px;height:10px;background:#d4d0c8"></div>
<div class="a" style="left:245px;top:229px;width:6px;height:1px;background:#dadada"></div>
<svg class="a" style="left:241px;top:226px" width="7" height="7" viewBox="0 0 7 7"><rect x="0.5" y="0.5" width="6" height="6" rx="0.8" fill="#f4f4f4" stroke="#a8a8a8" stroke-width="1"/><path d="M1.8 3.5 L5.2 3.5" stroke="#222" stroke-width="1.1"/></svg>
<svg class="a" style="left:251.5px;top:225px" width="10" height="8" viewBox="0 0 10 8"><defs><linearGradient id="gfb" x1="0" y1="0" x2="0" y2="1"><stop offset="0" stop-color="#8a9cf0"/><stop offset="0.5" stop-color="#3a4cc8"/><stop offset="1" stop-color="#0c1478"/></linearGradient></defs><path d="M0.8 1.8 Q0.8 0.6 2 0.6 L4 0.6 L5 1.8 L8.6 1.8 Q9.6 1.8 9.6 2.8 L9.6 6.8 Q9.6 7.8 8.6 7.8 L1.8 7.8 Q0.8 7.8 0.8 6.8 Z" fill="url(#gfb)"/><path d="M1.5 3 L8.8 3" stroke="#c0c8ff" stroke-width="0.7"/></svg>
<div class="a t" style="left:265.5px;top:224.3px;">My Personal Data</div>
<div class="a" style="left:257px;top:240px;width:6px;height:1px;background:#dadada"></div>
<svg class="a" style="left:264px;top:236px" width="8" height="10" viewBox="0 0 8 10"><path d="M0.5 0.8 L6 0.8 L7.5 2.3 L7.5 9.5 L0.5 9.5 Z" fill="#eef0fc" stroke="#b4bce6" stroke-width="0.9"/><path d="M5.8 0.6 L7.6 2.4" stroke="#3a5a9a" stroke-width="1.2"/><path d="M2.2 3.2 L2.2 6.2 Q2.2 7.8 4 7.8" fill="none" stroke="#2c8ee8" stroke-width="1.5"/><path d="M4 7.8 Q5.8 7.8 5.8 6.2 L5.8 3.2" fill="none" stroke="#2a48b0" stroke-width="1.5"/></svg>
<div class="a t" style="left:276.5px;top:235.2px;color:#a0a0a0">Company Website [documents  drafts  analyze]</div>
<div class="a" style="left:257px;top:251px;width:6px;height:1px;background:#dadada"></div>
<svg class="a" style="left:264px;top:247px" width="8" height="10" viewBox="0 0 8 10"><path d="M0.5 0.8 L6 0.8 L7.5 2.3 L7.5 9.5 L0.5 9.5 Z" fill="#eef0fc" stroke="#b4bce6" stroke-width="0.9"/><path d="M5.8 0.6 L7.6 2.4" stroke="#3a5a9a" stroke-width="1.2"/><path d="M2.2 3.2 L2.2 6.2 Q2.2 7.8 4 7.8" fill="none" stroke="#2c8ee8" stroke-width="1.5"/><path d="M4 7.8 Q5.8 7.8 5.8 6.2 L5.8 3.2" fill="none" stroke="#2a48b0" stroke-width="1.5"/></svg>
<div class="a t" style="left:276.5px;top:246.1px;color:#a0a0a0">My Emails [Outlook Express and Address Books]</div>
<div class="a" style="left:257px;top:262px;width:6px;height:1px;background:#dadada"></div>
<svg class="a" style="left:264px;top:258px" width="8" height="10" viewBox="0 0 8 10"><path d="M0.5 0.8 L6 0.8 L7.5 2.3 L7.5 9.5 L0.5 9.5 Z" fill="#eef0fc" stroke="#b4bce6" stroke-width="0.9"/><path d="M5.8 0.6 L7.6 2.4" stroke="#3a5a9a" stroke-width="1.2"/><path d="M2.2 3.2 L2.2 6.2 Q2.2 7.8 4 7.8" fill="none" stroke="#2c8ee8" stroke-width="1.5"/><path d="M4 7.8 Q5.8 7.8 5.8 6.2 L5.8 3.2" fill="none" stroke="#2a48b0" stroke-width="1.5"/></svg>
<div class="a t" style="left:276.5px;top:257.0px;color:#a0a0a0">My Photos and Videos</div>
<div class="a" style="left:257px;top:273px;width:6px;height:1px;background:#dadada"></div>
<svg class="a" style="left:264px;top:269px" width="8" height="10" viewBox="0 0 8 10"><path d="M0.5 0.8 L6 0.8 L7.5 2.3 L7.5 9.5 L0.5 9.5 Z" fill="#eef0fc" stroke="#b4bce6" stroke-width="0.9"/><path d="M5.8 0.6 L7.6 2.4" stroke="#3a5a9a" stroke-width="1.2"/><path d="M2.2 3.2 L2.2 6.2 Q2.2 7.8 4 7.8" fill="none" stroke="#2c8ee8" stroke-width="1.5"/><path d="M4 7.8 Q5.8 7.8 5.8 6.2 L5.8 3.2" fill="none" stroke="#2a48b0" stroke-width="1.5"/></svg>
<div class="a t" style="left:276.5px;top:267.9px;color:#a0a0a0">My Private Data</div>
<div class="a" style="left:257px;top:284px;width:6px;height:1px;background:#dadada"></div>
<svg class="a" style="left:264px;top:280px" width="8" height="10" viewBox="0 0 8 10"><path d="M0.5 0.8 L6 0.8 L7.5 2.3 L7.5 9.5 L0.5 9.5 Z" fill="#eef0fc" stroke="#b4bce6" stroke-width="0.9"/><path d="M5.8 0.6 L7.6 2.4" stroke="#3a5a9a" stroke-width="1.2"/><path d="M2.2 3.2 L2.2 6.2 Q2.2 7.8 4 7.8" fill="none" stroke="#2c8ee8" stroke-width="1.5"/><path d="M4 7.8 Q5.8 7.8 5.8 6.2 L5.8 3.2" fill="none" stroke="#2a48b0" stroke-width="1.5"/></svg>
<div class="a t" style="left:276.5px;top:278.8px;color:#a0a0a0">My Windows Settings</div>
<div class="a" style="left:245px;top:295px;width:6px;height:1px;background:#dadada"></div>
<svg class="a" style="left:241px;top:292px" width="7" height="7" viewBox="0 0 7 7"><rect x="0.5" y="0.5" width="6" height="6" rx="0.8" fill="#f4f4f4" stroke="#a8a8a8" stroke-width="1"/><path d="M2.5 1.8 L5 3.5 L2.5 5.2 Z" fill="#222"/></svg>
<svg class="a" style="left:251.5px;top:291px" width="10" height="8" viewBox="0 0 10 8"><defs><linearGradient id="gfb" x1="0" y1="0" x2="0" y2="1"><stop offset="0" stop-color="#8a9cf0"/><stop offset="0.5" stop-color="#3a4cc8"/><stop offset="1" stop-color="#0c1478"/></linearGradient></defs><path d="M0.8 1.8 Q0.8 0.6 2 0.6 L4 0.6 L5 1.8 L8.6 1.8 Q9.6 1.8 9.6 2.8 L9.6 6.8 Q9.6 7.8 8.6 7.8 L1.8 7.8 Q0.8 7.8 0.8 6.8 Z" fill="url(#gfb)"/><path d="M1.5 3 L8.8 3" stroke="#c0c8ff" stroke-width="0.7"/></svg>
<div class="a t" style="left:265.5px;top:289.7px;">Work</div>
<div class="a" style="left:245px;top:306px;width:6px;height:1px;background:#dadada"></div>
<svg class="a" style="left:241px;top:303px" width="7" height="7" viewBox="0 0 7 7"><rect x="0.5" y="0.5" width="6" height="6" rx="0.8" fill="#f4f4f4" stroke="#a8a8a8" stroke-width="1"/><path d="M2.5 1.8 L5 3.5 L2.5 5.2 Z" fill="#222"/></svg>
<svg class="a" style="left:251.5px;top:302px" width="10" height="8" viewBox="0 0 10 8"><defs><linearGradient id="gfb" x1="0" y1="0" x2="0" y2="1"><stop offset="0" stop-color="#8a9cf0"/><stop offset="0.5" stop-color="#3a4cc8"/><stop offset="1" stop-color="#0c1478"/></linearGradient></defs><path d="M0.8 1.8 Q0.8 0.6 2 0.6 L4 0.6 L5 1.8 L8.6 1.8 Q9.6 1.8 9.6 2.8 L9.6 6.8 Q9.6 7.8 8.6 7.8 L1.8 7.8 Q0.8 7.8 0.8 6.8 Z" fill="url(#gfb)"/><path d="M1.5 3 L8.8 3" stroke="#c0c8ff" stroke-width="0.7"/></svg>
<div class="a t" style="left:265.5px;top:300.6px;">Work (personal)</div>
<div class="a t" style="left:237.5px;top:352.5px">File Name:</div>
<div class="a" style="left:271px;top:351px;width:211px;height:12px;background:#fff;border-top:1px solid #5a5a5a;border-left:1px solid #5a5a5a;border-right:1px solid #fff;border-bottom:1px solid #fff;box-sizing:border-box"></div>
<div class="a" style="left:273px;top:353px;width:1px;height:8px;background:#000"></div>
<div class="a" style="left:111px;top:378px;width:385px;height:1px;background:#808080"></div>
<div class="a" style="left:111px;top:379px;width:385px;height:1px;background:#fff"></div>
<div class="a" style="left:115px;top:390px;width:8px;height:8px;background:#fff;border-top:1px solid #5a5a5a;border-left:1px solid #5a5a5a;border-right:1px solid #fff;border-bottom:1px solid #fff;box-sizing:border-box"></div>
<div class="a t" style="left:126px;top:388.5px;">Default</div>
<div class="a" style="left:347px;top:384px;width:45px;height:16px;background:#d4d0c8;box-sizing:border-box;border-right:1px solid #404040;border-bottom:1px solid #404040;box-shadow:inset 1px 1px 0 #fff, inset -1px -1px 0 #808080;"></div>
<div class="a t" style="left:347px;top:387px;width:45px;text-align:center;color:#a0a0a0;text-shadow:1px 1px 0 #fff">&lt; <u>B</u>ack</div>
<div class="a" style="left:392.5px;top:384px;width:47px;height:16px;background:#d4d0c8;box-sizing:border-box;border:1px solid #000;box-shadow:inset 1px 1px 0 #fff, inset -1px -1px 0 #808080;"></div>
<div class="a t" style="left:392.5px;top:387px;width:47px;text-align:center;color:#000"><u>N</u>ext &gt;</div>
<div class="a" style="left:445.5px;top:384px;width:46px;height:16px;background:#d4d0c8;box-sizing:border-box;border-right:1px solid #404040;border-bottom:1px solid #404040;box-shadow:inset 1px 1px 0 #fff, inset -1px -1px 0 #808080;"></div>
<div class="a t" style="left:445.5px;top:387px;width:46px;text-align:center;color:#000">Cancel</div>
</body></html>
